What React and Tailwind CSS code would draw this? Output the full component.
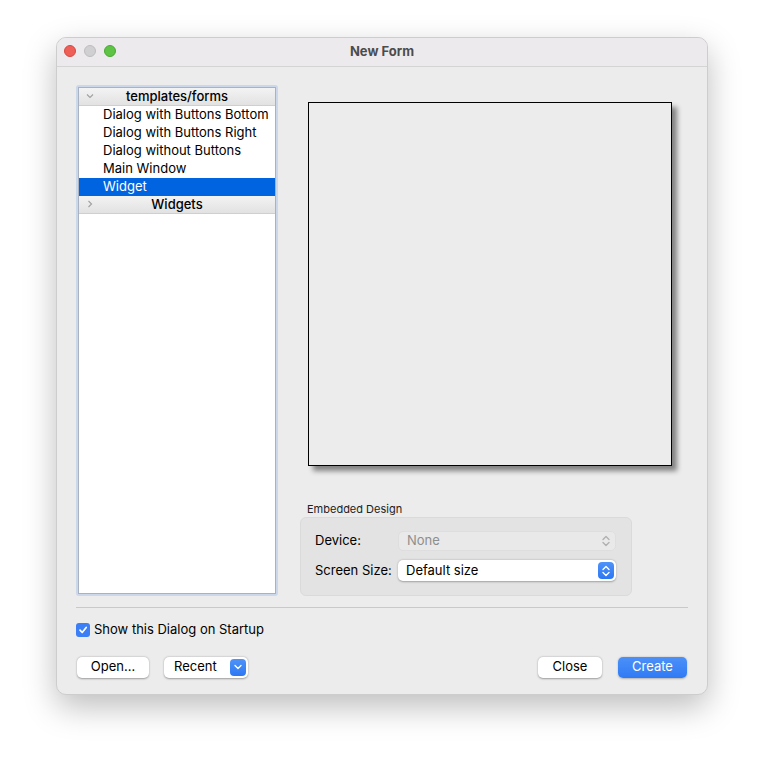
import React from "react";

const FONT = { fontFamily: "Inter, 'Liberation Sans', sans-serif" };

const templates = [
    "Dialog with Buttons Bottom",
    "Dialog with Buttons Right",
    "Dialog without Buttons",
    "Main Window",
    "Widget"
];

const UpDown = ({ color = "#9a9a9a" }) => (
    <svg width="8" height="12" viewBox="0 0 8 12" fill="none">
        <path d="M1 4.5 L4 1.5 L7 4.5" stroke={color} strokeWidth="1.4" strokeLinecap="round" strokeLinejoin="round" />
        <path d="M1 7.5 L4 10.5 L7 7.5" stroke={color} strokeWidth="1.4" strokeLinecap="round" strokeLinejoin="round" />
    </svg>
);

const GroupHeader = ({ open, label }) => (
    <div className="relative h-[18px] flex items-center justify-center bg-gradient-to-b from-[#f3f3f3] to-[#e2e2e2] border-b border-[#cfcfcf] text-[13px] font-medium text-black">
        <span className="absolute left-[6px] top-[3px]">
            {open ? (
                <svg width="10" height="10" viewBox="0 0 10 10"><path d="M2 3.5 L5 6.5 L8 3.5" stroke="#a0a0a0" strokeWidth="1.1" fill="none" /></svg>
            ) : (
                <svg width="10" height="10" viewBox="0 0 10 10"><path d="M3.5 2 L6.5 5 L3.5 8" stroke="#a0a0a0" strokeWidth="1.1" fill="none" /></svg>
            )}
        </span>
        {label}
    </div>
);

const App = () => {
    return (
        <div className="w-[764px] h-[769px] bg-white pt-[37px] pl-[56px]" style={FONT}>
            <div className="w-[652px] h-[658px] rounded-[10px] bg-[#ececec] border border-[#cdcdcd] shadow-[0_12px_32px_rgba(0,0,0,0.26)] overflow-hidden">
                {/* title bar */}
                <div className="relative h-[29px] bg-[#eceaec] border-b border-[#d4d4d4] flex items-center justify-center">
                    <div className="absolute left-[7px] top-[7px] flex gap-[8px]">
                        <span className="w-[12px] h-[12px] rounded-full bg-[#ed5f57] border border-[#d9473f]" />
                        <span className="w-[12px] h-[12px] rounded-full bg-[#d0cfd1] border border-[#bdbcbe]" />
                        <span className="w-[12px] h-[12px] rounded-full bg-[#5fc346] border border-[#4aa934]" />
                    </div>
                    <span className="text-[13px] font-bold text-[#4c4c4c]">New Form</span>
                </div>

                <div className="pl-[19px] pt-[18px]">
                    <div className="flex">
                        {/* tree */}
                        <div className="w-[202px] h-[511px] border-2 border-[#cbd7ea] rounded-[3px]">
                            <div className="h-full border border-[#a9b2c0] bg-white">
                                <GroupHeader open label="templates/forms" />
                                {templates.map((t) => (
                                    <div
                                        key={t}
                                        className={`h-[18px] pl-[24px] flex items-center text-[13px] ${t === "Widget" ? "bg-[#0064e1] text-white" : "text-black"}`}
                                    >
                                        {t}
                                    </div>
                                ))}
                                <GroupHeader label="Widgets" />
                            </div>
                        </div>

                        {/* right column */}
                        <div className="ml-[22px] flex flex-col">
                            <div className="ml-[8px] mt-[17px] w-[364px] h-[364px] bg-[#ececec] border border-black shadow-[5px_5px_5px_rgba(0,0,0,0.45)]" />
                            <div className="mt-[36px] ml-[7px] text-[11px] leading-[14px] text-[#222]">Embedded Design</div>
                            <div className="w-[332px] h-[79px] mt-[1px] rounded-[6px] bg-[#e3e3e3] border border-[#dadada] pl-[14px] pt-[13px]">
                                <div className="flex items-center h-[20px]">
                                    <span className="w-[83px] text-[13px] text-black">Device:</span>
                                    <div className="w-[218px] h-[20px] rounded-[5px] bg-[#e9e9e9] border border-[#dedede] flex items-center justify-between pl-[8px] pr-[5px]">
                                        <span className="text-[13px] text-[#8e8e8e]">None</span>
                                        <UpDown color="#b0b0b0" />
                                    </div>
                                </div>
                                <div className="flex items-center h-[21px] mt-[9px]">
                                    <span className="w-[83px] text-[13px] text-black">Screen Size:</span>
                                    <div className="w-[218px] h-[21px] rounded-[5px] bg-white shadow-[0_0.5px_2px_rgba(0,0,0,0.3)] flex items-center justify-between pl-[8px] pr-[2px]">
                                        <span className="text-[13px] text-black">Default size</span>
                                        <span className="w-[16px] h-[17px] rounded-[4px] bg-gradient-to-b from-[#4f93f8] to-[#2c77f4] flex items-center justify-center">
                                            <UpDown color="#ffffff" />
                                        </span>
                                    </div>
                                </div>
                            </div>
                        </div>
                    </div>

                    <div className="w-[612px] h-px bg-[#c9c9c9] mt-[11px]" />

                    <div className="flex items-center mt-[14px] h-[16px]">
                        <span className="w-[14px] h-[14px] rounded-[3px] bg-[#3b7ef5] flex items-center justify-center">
                            <svg width="10" height="10" viewBox="0 0 10 10"><path d="M2 5.2 L4.2 7.5 L8.2 2.5" stroke="white" strokeWidth="1.7" fill="none" strokeLinecap="round" strokeLinejoin="round" /></svg>
                        </span>
                        <span className="ml-[4px] text-[13px] text-black">Show this Dialog on Startup</span>
                    </div>

                    <div className="flex items-center mt-[18px] w-[612px] h-[22px]">
                        <button className="ml-px w-[72px] h-[21px] rounded-[5px] bg-white shadow-[0_0.5px_2px_rgba(0,0,0,0.35)] text-[13px] text-black">Open...</button>
                        <div className="ml-[15px] w-[84px] h-[21px] rounded-[5px] bg-white shadow-[0_0.5px_2px_rgba(0,0,0,0.35)] flex items-center justify-between pl-[10px] pr-[2px]">
                            <span className="text-[13px] text-black">Recent</span>
                            <span className="w-[16px] h-[17px] rounded-[4px] bg-gradient-to-b from-[#4f93f8] to-[#2c77f4] flex items-center justify-center">
                                <svg width="8" height="6" viewBox="0 0 8 6"><path d="M1 1.5 L4 4.5 L7 1.5" stroke="white" strokeWidth="1.4" fill="none" strokeLinecap="round" strokeLinejoin="round" /></svg>
                            </span>
                        </div>
                        <div className="flex-1" />
                        <button className="w-[64px] h-[21px] rounded-[5px] bg-white shadow-[0_0.5px_2px_rgba(0,0,0,0.35)] text-[13px] text-black">Close</button>
                        <button className="ml-[16px] mr-px w-[69px] h-[21px] rounded-[5px] bg-gradient-to-b from-[#4c90f8] to-[#2f7af5] shadow-[0_0.5px_2px_rgba(0,0,0,0.25)] text-[13px] text-white">Create</button>
                    </div>
                </div>
            </div>
        </div>
    );
};

export default App;
